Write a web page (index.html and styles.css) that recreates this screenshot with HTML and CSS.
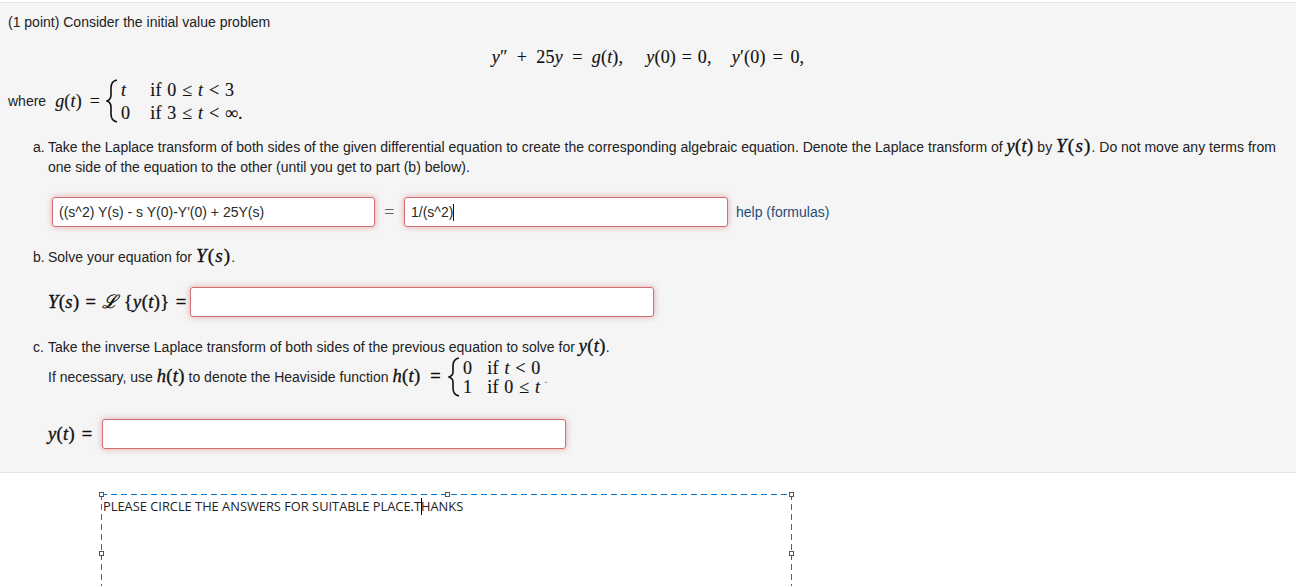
FILE: index.html
```html
<!DOCTYPE html>
<html lang="en">
<head>
<meta charset="utf-8">
<title>Initial value problem</title>
<link rel="stylesheet" href="styles.css">
</head>
<body>
<main class="panel">
  <p class="intro">(1 point) Consider the initial value problem</p>
  <div class="display math">
    <span class="d1"><i>y</i>″ + 25<i>y</i> = <i>g</i>(<i>t</i>),</span>
    <span class="d2"><i>y</i>(0) = 0,</span>
    <span class="d3"><i>y</i>′(0) = 0,</span>
  </div>
  <div class="where">
    <span>where</span>
    <span class="math gdef"><i>g</i>(<i>t</i>) =</span>
    <svg class="brace" viewBox="0 0 12 44" width="12" height="44"><path d="M11 1C6 2 5 5 5 9V16C5 19 4 21 1 22C4 23 5 25 5 28V35C5 39 6 42 11 43" fill="none" stroke="#111" stroke-width="1.6"/></svg>
    <div class="cases math wide">
      <i>t</i><span>if 0 ≤ <i>t</i> &lt; 3</span>
      <span>0</span><span>if 3 ≤ <i>t</i> &lt; ∞.</span>
    </div>
  </div>
  <section class="part part-a">
    <p class="lead"><span class="label">a.</span>Take the Laplace transform of both sides of the given differential equation to create the corresponding algebraic equation. Denote the Laplace transform of <span class="math big"><i>y</i>(<i>t</i>)</span> by <span class="math big cap"><i>Y</i>(<i>s</i>)</span>. Do not move any terms from one side of the equation to the other (until you get to part (b) below).</p>
    <div class="answer answer-a">
      <div class="field w323">((s^2) Y(s) - s Y(0)-Y'(0) + 25Y(s)</div>
      <span class="math eq">=</span>
      <div class="field w324">1/(s^2)<span class="caret"></span></div>
      <a class="help">help (formulas)</a>
    </div>
  </section>
  <section class="part part-b">
    <p class="lead"><span class="label">b.</span>Solve your equation for <span class="math big cap"><i>Y</i>(<i>s</i>)</span>.</p>
    <div class="answer answer-b">
      <span class="math big transform"><i>Y</i>(<i>s</i>) = <i>ℒ</i> {<i>y</i>(<i>t</i>)} =</span>
      <div class="field w464"></div>
    </div>
  </section>
  <section class="part part-c">
    <p class="lead"><span class="label">c.</span>Take the inverse Laplace transform of both sides of the previous equation to solve for <span class="math big"><i>y</i>(<i>t</i>)</span>.</p>
    <div class="heaviside">
      <span>If necessary, use <span class="math big"><i>h</i>(<i>t</i>)</span> to denote the Heaviside function <span class="math big wider"><i>h</i>(<i>t</i>) =</span></span>
      <svg class="brace small" viewBox="0 0 12 40" width="12" height="40"><path d="M11 1C6 2 5 5 5 9V15C5 18 4 19 1 20C4 21 5 22 5 25V31C5 35 6 38 11 39" fill="none" stroke="#111" stroke-width="1.6"/></svg>
      <div class="cases math tight">
        <span>0</span><span>if <i>t</i> &lt; 0</span>
        <span>1</span><span>if 0 ≤ <i>t</i></span>
      </div>
      <span class="dot">.</span>
    </div>
    <div class="answer answer-c">
      <span class="math big spaced"><i>y</i>(<i>t</i>) =</span>
      <div class="field w464"></div>
    </div>
  </section>
</main>
<div class="editor">
  <div class="textbox">
    PLEASE CIRCLE THE ANSWERS FOR SUITABLE PLACE.T<span class="cursor"></span>HANKS
    <span class="handle h-tl"></span>
    <span class="handle h-tm"></span>
    <span class="handle h-tr"></span>
    <span class="handle h-ml"></span>
    <span class="handle h-mr"></span>
  </div>
</div>
</body>
</html>
```
FILE: styles.css
```css
* { box-sizing: border-box; }
html, body { margin: 0; height: 586px; overflow: hidden; background: #fff; }
body { font-family: "Liberation Sans", Arial, sans-serif; font-size: 14px; line-height: 20px; color: #222; }
p { margin: 0; }
.panel { width: 1296px; height: 471px; margin-top: 2px; padding: 9px 8px 0; background: #f5f5f5; border-top: 1px solid #e6e6e6; border-bottom: 1px solid #e3e3e3; }
.math { font-family: "Liberation Serif", "Times New Roman", serif; font-size: 18px; color: #111; word-spacing: 1px; letter-spacing: .2px; -webkit-text-stroke: .15px #111; }
.math.big { font-size: 18.5px; letter-spacing: .3px; line-height: 18px; word-spacing: 0; -webkit-text-stroke: .35px #111; }
.math.cap { font-size: 19px; letter-spacing: 1.2px; }
.math.spaced { word-spacing: 2px; }
.math.wider { word-spacing: 5px; }
.math.transform { letter-spacing: .4px; word-spacing: 1px; }
.display { display: flex; justify-content: center; margin-top: 15px; height: 20px; white-space: pre; }
.d1 { word-spacing: 4.5px; }
.d2 { margin-left: 23px; word-spacing: 1px; }
.d3 { margin-left: 20px; word-spacing: 2.5px; }
.where { display: flex; align-items: center; height: 44px; margin-top: 12px; }
.gdef { margin-left: 9px; word-spacing: 3px; }
.brace { margin: 0 0 0 6px; flex: none; }
.cases { display: grid; grid-template-columns: auto auto; margin-left: 3px; }
.cases.wide { column-gap: 20px; padding-top: 2px; line-height: 23px; }
.cases.tight { column-gap: 15px; padding-top: 1px; line-height: 19px; }
.part { padding-left: 25px; }
.part-a { margin-top: 14px; }
.lead { position: relative; padding-left: 15px; }
.label { display: inline-block; width: 15px; margin-left: -15px; }
.answer { display: flex; align-items: center; padding-left: 15px; }
.answer-a { margin-top: 20px; padding-left: 19px; }
.answer-b { margin-top: 20px; }
.answer-c { margin-top: 22px; }
.field { height: 30px; padding: 0 6px; font-size: 14px; color: #2a2a2a; background: #fff; border: 1px solid #cf6f6f; border-radius: 3px; box-shadow: 0 0 6px rgba(200, 70, 70, .45); display: flex; align-items: center; }
.w323 { width: 323px; }
.w324 { width: 324px; }
.w464 { width: 464px; margin-left: 4px; }
.answer-c .w464 { margin-left: 9px; }
.eq { width: 29px; text-align: center; color: #666; -webkit-text-stroke: 0; }
.help { margin-left: 8px; color: #1f4e79; }
.caret { width: 1px; height: 17px; background: #111; }
.part-b { margin-top: 20px; }
.part-c { margin-top: 20px; }
.heaviside { display: flex; align-items: center; height: 40px; padding-left: 15px; }
.brace.small { margin-left: 7px; }
.dot { margin: 6px 0 0 4px; font-size: 10px; }
.editor { height: 113px; padding: 21px 0 0 101px; overflow: hidden; }
.textbox { position: relative; width: 691px; height: 200px; padding: 4px 2px; font-family: "Open Sans", "Noto Sans", sans-serif; font-size: 12.85px; line-height: 17px; color: #222;
  background:
    repeating-linear-gradient(90deg, #0078d7 0 6px, transparent 6px 10px) top left / 100% 1px no-repeat,
    repeating-linear-gradient(180deg, #0078d7 0 6px, transparent 6px 10px) top left / 1px 100% no-repeat,
    repeating-linear-gradient(180deg, #0078d7 0 6px, transparent 6px 10px) top right / 1px 100% no-repeat; }
.cursor { display: inline-block; width: 1px; height: 17px; margin-right: -1px; vertical-align: top; background: #000; }
.handle { position: absolute; width: 5px; height: 5px; background: #fff; border: 1px solid #555; }
.h-tl { left: -2px; top: -2px; }
.h-tm { left: 344px; top: -2px; }
.h-tr { right: -2px; top: -2px; }
.h-ml { left: -2px; top: 57px; }
.h-mr { right: -2px; top: 57px; }
```
